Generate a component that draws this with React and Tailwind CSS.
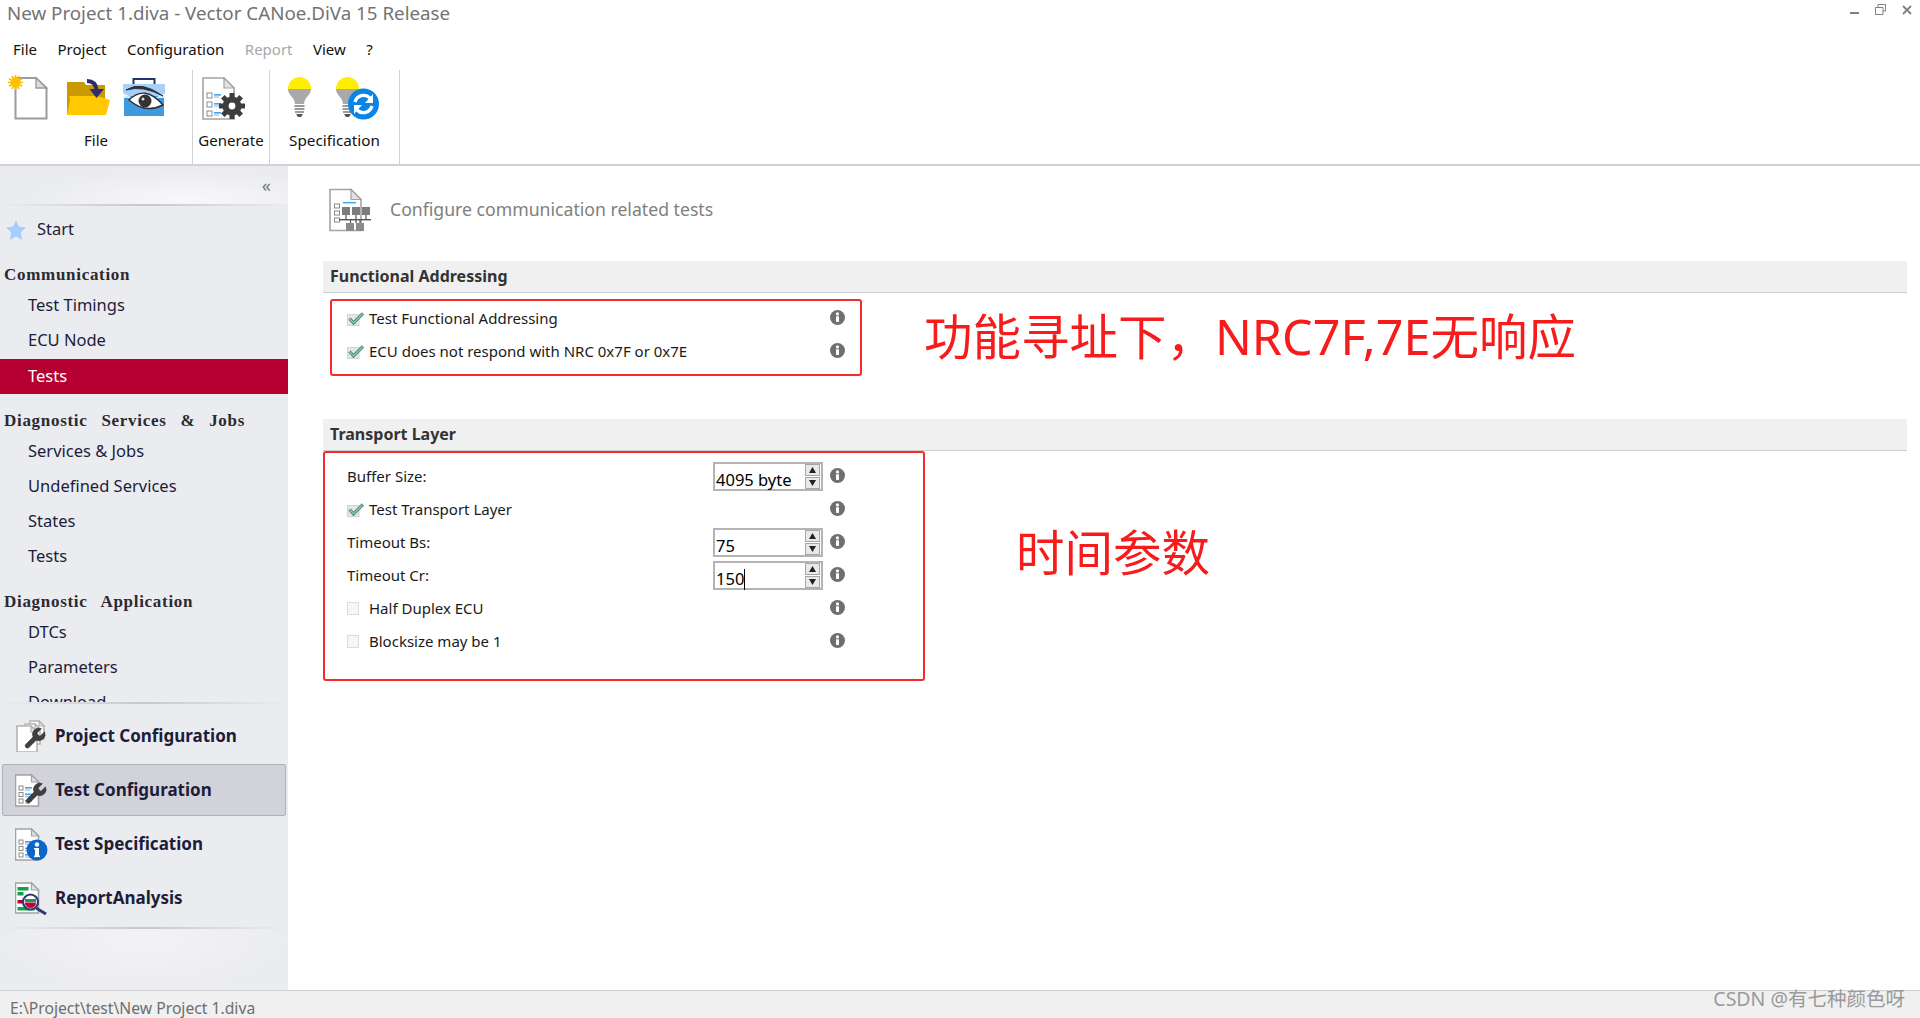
const font = { fontFamily: '"Noto Sans", "Noto Sans CJK SC", sans-serif' };

function Gear({ cx, cy, r = 10 }) {
  return (
    <g fill="#3d3d3d">
      {[0, 45, 90, 135, 180, 225, 270, 315].map((a) => (
        <rect key={a} x={cx - 2.5} y={cy - r - 3.5} width="5" height="7" transform={`rotate(${a} ${cx} ${cy})`} />
      ))}
      <circle cx={cx} cy={cy} r={r} />
      <circle cx={cx} cy={cy} r={r * 0.36} fill="#fff" />
    </g>
  );
}

function DocShape({ w = 31, h = 41, x = 0.5, y = 0.5, fold = 10, stroke = "#a3a3a3" }) {
  return (
    <g>
      <path d={`M${x} ${y}H${x + w - fold}L${x + w} ${y + fold}V${y + h}H${x}Z`} fill="#fff" stroke={stroke} strokeWidth="1.6" />
      <path d={`M${x + w - fold} ${y}V${y + fold}H${x + w}Z`} fill="#e2e2e2" stroke={stroke} strokeWidth="1.2" />
    </g>
  );
}

function ListMarks({ x, y, gap = 8, s = 5 }) {
  return (
    <g>
      {[0, 1, 2].map((i) => (
        <g key={i}>
          <rect x={x} y={y + i * gap} width={s} height={s} fill="#fff" stroke="#8a8a8a" strokeWidth="1" />
          <rect x={x + s + 2} y={y + i * gap + 1} width="7" height="1.6" fill="#49a3ea" />
          <rect x={x + s + 2} y={y + i * gap + 3.4} width="5" height="1.4" fill="#9ccbf0" />
        </g>
      ))}
    </g>
  );
}

function Wrench({ x, y, s = 1.35 }) {
  return (
    <path
      transform={`translate(${x} ${y}) scale(${s})`}
      fill="#3f3f3f"
      stroke="#3f3f3f"
      strokeWidth="0.6"
      d="M14.7 6.3a1 1 0 0 0 0 1.4l1.6 1.6a1 1 0 0 0 1.4 0l3.77-3.77a6 6 0 0 1-7.94 7.94l-6.91 6.91a2.12 2.12 0 0 1-3-3l6.91-6.91a6 6 0 0 1 7.94-7.94l-3.76 3.76z"
    />
  );
}

function NewFileIcon() {
  return (
    <svg width="40" height="45" viewBox="0 0 40 45">
      <path d="M7.5 3H28L38.5 13V43.5H7.5Z" fill="#fff" stroke="#9c9c9c" strokeWidth="2" />
      <path d="M28 3V13H38.5Z" fill="#dcdcdc" stroke="#9c9c9c" strokeWidth="1.4" />
      <g fill="#ffc000">
        {[0, 30, 60, 90, 120, 150].map((a) => (
          <rect key={a} x="6.7" y="0" width="1.6" height="15" transform={`rotate(${a} 7.5 7.5)`} />
        ))}
        <circle cx="7.5" cy="7.5" r="5" />
      </g>
    </svg>
  );
}

function FolderIcon() {
  return (
    <svg width="43" height="37" viewBox="0 0 43 37">
      <path d="M0 4H17L19 7H38V37H0Z" fill="#c99a00" />
      <path d="M3 22H43L39 37H0Z" fill="#ffc800" />
      <path d="M2.5 18H30L43 22H3Z" fill="#ffc800" />
      <path d="M20 3C26 3 29 6 29.5 12" fill="none" stroke="#2c2e6b" strokeWidth="4" />
      <path d="M22.5 11H37L29.5 20Z" fill="#2c2e6b" />
    </svg>
  );
}

function EyeBoxIcon() {
  return (
    <svg width="42" height="38" viewBox="0 0 42 38">
      <rect x="10.5" y="1" width="21" height="7" fill="none" stroke="#22356e" strokeWidth="2" />
      <rect x="0" y="6" width="42" height="14" fill="#a6d0f6" />
      <rect x="1" y="18" width="40" height="20" fill="#3f9ade" />
      <path d="M0 15L10 20H32L42 15V20H0Z" fill="#fff" opacity="0.8" />
      <path d="M6 22Q22 6 40 27Q22 36 6 22Z" fill="#fff" stroke="#2d2d3a" strokeWidth="1.4" />
      <circle cx="22" cy="23" r="6.5" fill="#333" />
      <circle cx="20" cy="21" r="1.5" fill="#ddd" />
      <path d="M3 12Q18 2 40 18Q20 7 3 12Z" fill="#30303d" stroke="#30303d" />
    </svg>
  );
}

function GenerateIcon() {
  return (
    <svg width="44" height="43" viewBox="0 0 44 43">
      <DocShape w={31} h={41} x={1} y={1} />
      <ListMarks x={5} y={16} gap={9} s={5} />
      <Gear cx={30} cy={29} r={9.5} />
    </svg>
  );
}

function BulbShape() {
  return (
    <g>
      <path d="M0 12A11.5 12 0 0 1 23 12Z" fill="#ffee00" />
      <path d="M0 12H23C23 18 16.5 20 16 27H7C6.5 20 0 18 0 12Z" fill="#a9a9a9" />
      <rect x="6.5" y="28" width="10" height="2" fill="#9a9a9a" />
      <rect x="6.5" y="31" width="10" height="2" fill="#9a9a9a" />
      <rect x="7" y="34" width="9" height="2" fill="#9a9a9a" />
      <path d="M8 37H15L13 40H10Z" fill="#555" />
    </g>
  );
}

function BulbIcon() {
  return (
    <svg width="23" height="41" viewBox="0 0 23 41">
      <BulbShape />
    </svg>
  );
}

function BulbSyncIcon() {
  return (
    <svg width="43" height="43" viewBox="0 0 43 43">
      <BulbShape />
      <circle cx="27.5" cy="27" r="15.5" fill="#0a84e6" />
      <path d="M19 25A9 9 0 0 1 34 21" fill="none" stroke="#fff" strokeWidth="3.4" />
      <path d="M37 17V26H29Z" fill="#fff" />
      <path d="M36 29A9 9 0 0 1 21 33" fill="none" stroke="#fff" strokeWidth="3.4" />
      <path d="M18 37V28H26Z" fill="#fff" />
    </svg>
  );
}

function PageNetworkIcon() {
  return (
    <svg width="42" height="44" viewBox="0 0 42 44" className="shrink-0">
      <DocShape w={31} h={41} x={1} y={1.5} />
      <rect x="5.5" y="16" width="5" height="4" fill="#fff" stroke="#888" />
      <rect x="5.5" y="23" width="5" height="4" fill="#fff" stroke="#888" />
      <rect x="5.5" y="30" width="5" height="4" fill="#fff" stroke="#888" />
      <rect x="14" y="14" width="13" height="1.4" fill="#3ba3ea" />
      <rect x="13" y="19" width="8" height="8" fill="#7c7c7c" />
      <rect x="23" y="19" width="8" height="8" fill="#7c7c7c" />
      <rect x="33" y="19" width="8" height="8" fill="#7c7c7c" />
      <rect x="10" y="31" width="32" height="1.4" fill="#555" />
      <path d="M17 27V31M27 27V35M37 27V31M21.5 31V35M31 31V35" stroke="#555" strokeWidth="1.2" />
      <rect x="17" y="35" width="8" height="8" fill="#8a8a8a" />
      <rect x="27" y="35" width="8" height="8" fill="#8a8a8a" />
    </svg>
  );
}

function ProjectConfigIcon() {
  return (
    <svg width="32" height="32" viewBox="0 0 32 32">
      <DocShape w={14} h={18} x={14} y={1} fold={5} stroke="#b4b4b4" />
      <DocShape w={15} h={20} x={9} y={4} fold={5} stroke="#b4b4b4" />
      <DocShape w={20} h={26} x={1} y={6} fold={6} stroke="#b4b4b4" />
      <Wrench x={6} y={6} s={1.05} />
    </svg>
  );
}

function TestConfigIcon() {
  return (
    <svg width="33" height="33" viewBox="0 0 33 33">
      <DocShape w={23} h={31} x={0.5} y={1} fold={7} />
      <ListMarks x={4} y={12} gap={6.5} s={4} />
      <Wrench x={8} y={7} s={1.05} />
    </svg>
  );
}

function TestSpecIcon() {
  return (
    <svg width="33" height="33" viewBox="0 0 33 33">
      <DocShape w={23} h={31} x={0.5} y={1} fold={7} />
      <ListMarks x={4} y={12} gap={6.5} s={4} />
      <circle cx="22" cy="22" r="10.5" fill="#0b66c8" />
      <rect x="20" y="20" width="4" height="9" fill="#fff" />
      <rect x="19" y="20" width="3" height="1.6" fill="#fff" />
      <rect x="19" y="27.5" width="6" height="1.6" fill="#fff" />
      <circle cx="22" cy="16.5" r="2.2" fill="#fff" />
    </svg>
  );
}

function ReportIcon() {
  return (
    <svg width="33" height="33" viewBox="0 0 33 33">
      <DocShape w={23} h={30} x={0.5} y={1} fold={7} />
      <rect x="2.5" y="5" width="11" height="3.5" fill="#0fa24a" />
      <rect x="2.5" y="10" width="6" height="3.5" fill="#0fa24a" />
      <rect x="2.5" y="18" width="8" height="3.5" fill="#b9003a" />
      <rect x="2.5" y="25" width="17" height="3.5" fill="#0fa24a" />
      <circle cx="15.5" cy="20" r="7.5" fill="#fff" stroke="#333a70" strokeWidth="2.2" />
      <path d="M10 17H21V20H10Z" fill="#0fa24a" />
      <path d="M10 20.5H21A5.5 5.5 0 0 1 10 20.5Z" fill="#b9003a" />
      <path d="M21 26L31 32" stroke="#333a70" strokeWidth="3" />
    </svg>
  );
}

function Checked() {
  return (
    <svg width="17" height="14" viewBox="0 0 17 14" className="shrink-0">
      <rect x="0.5" y="2.5" width="11.5" height="11" fill="#e3e6e4" stroke="#d2d4d3" />
      <path d="M2.5 6.5L6.5 11L16 1.5" fill="none" stroke="#4f917b" strokeWidth="3.2" />
      <path d="M2.5 6.5L6.5 11L16 1.5" fill="none" stroke="#b6e6d2" strokeWidth="1" />
    </svg>
  );
}

function Unchecked() {
  return <div className="w-[12px] h-[13px] mr-[10px] shrink-0 bg-[#f6f6f6] border border-[#dcdcdc]"></div>;
}

function Info() {
  return (
    <svg width="15" height="15" viewBox="0 0 15 15" className="shrink-0 -mt-[2px]">
      <circle cx="7.5" cy="7.5" r="7.5" fill="#6f6f6f" />
      <circle cx="7.5" cy="3.9" r="1.6" fill="#fff" />
      <rect x="6" y="6.3" width="3" height="5.6" fill="#fff" />
    </svg>
  );
}

function Spinner({ value, caret }) {
  return (
    <div className="w-[110px] h-[29px] border-2 border-[#b4b4b4] bg-white flex items-center justify-between pl-[1px] pr-[1px] text-[16.5px] text-black">
      <span className="flex items-center mt-[8px]">
        {value}
        {caret && <span className="w-px h-[21px] bg-black"></span>}
      </span>
      <div className="w-[15px] h-[25px] flex flex-col justify-between">
        <div className="h-[12px] bg-[#e9e9e9] border border-[#a6a6a6] flex items-center justify-center">
          <svg width="7" height="6" viewBox="0 0 7 6"><path d="M3.5 0L7 6H0Z" fill="#222" /></svg>
        </div>
        <div className="h-[12px] bg-[#e9e9e9] border border-[#a6a6a6] flex items-center justify-center">
          <svg width="7" height="6" viewBox="0 0 7 6"><path d="M0 0H7L3.5 6Z" fill="#222" /></svg>
        </div>
      </div>
    </div>
  );
}

function Divider() {
  return <div className="h-[2px] shrink-0 bg-gradient-to-r from-transparent via-[#c6c8ce] to-transparent"></div>;
}

function NavRow({ label, active }) {
  return (
    <div className={`h-[35px] pl-[28px] flex items-center text-[16.5px] ${active ? "bg-[#b50031] text-white" : "text-[#1d1d3a]"}`}>
      {label}
    </div>
  );
}

function NavSection({ label }) {
  return (
    <div
      className="h-[28px] pl-[4px] pt-[2px] flex items-center text-[17px] font-bold tracking-[0.7px] [word-spacing:2px] text-[#2a2a33] whitespace-pre"
      style={{ fontFamily: '"Liberation Serif", serif' }}
    >
      {label}
    </div>
  );
}

function ViewButton({ icon, label, active }) {
  return (
    <div
      className={`flex items-center gap-[7px] text-[17px] font-bold text-[#1d1d3a] ${
        active
          ? "h-[52px] my-[1px] mx-[2px] pl-[12px] bg-[#d2d3da] border border-[#b0b1b9] rounded-[2px]"
          : "h-[54px] pl-[15px]"
      }`}
    >
      <div className="w-[33px] flex justify-center">{icon}</div>
      <span>{label}</span>
    </div>
  );
}

function SectionHeader({ label }) {
  return (
    <div className="h-[32px] bg-[#f0f0f0] border-b border-[#cccccc] pl-[7px] pb-[2px] flex items-center text-[16px] font-bold text-[#333]">
      {label}
    </div>
  );
}

function OptionRow({ checked, label, input, caret }) {
  return (
    <div className="h-[33px] flex items-center text-[15px] text-[#1a1a1a]">
      <div className="flex-1 flex items-center">
        {checked === true && <Checked />}
        {checked === true && <span className="w-[5px]"></span>}
        {checked === false && <Unchecked />}
        {label}
      </div>
      {input && <Spinner value={input} caret={caret} />}
      <div className="w-[22px] flex justify-end">
        <Info />
      </div>
    </div>
  );
}

export default function App() {
  return (
    <div className="relative w-[1920px] h-[1018px] overflow-hidden bg-white flex flex-col" style={font}>
      {/* title bar */}
      <div className="h-[34px] shrink-0 pl-[7px] pr-[8px] flex items-start justify-between">
        <span className="text-[18.75px] leading-[26px] text-[#737373]">New Project 1.diva - Vector CANoe.DiVa 15 Release</span>
        <div className="flex items-start gap-[16px] pt-[4px]">
          <div className="w-[9px] h-[2px] bg-[#808080] mt-[8px]"></div>
          <svg width="11" height="11" viewBox="0 0 11 11">
            <path d="M3 3V0.5H10.5V7H8M0.5 3.5H8V10.5H0.5Z" fill="none" stroke="#808080" />
          </svg>
          <svg width="10" height="10" viewBox="0 0 10 10" className="mt-[1px]">
            <path d="M1 1L9 9M9 1L1 9" stroke="#808080" strokeWidth="1.8" />
          </svg>
        </div>
      </div>

      {/* menu */}
      <div className="h-[36px] shrink-0 pl-[13px] pb-[6px] flex items-center gap-[20.5px] text-[15px] text-[#111]">
        <span>File</span>
        <span>Project</span>
        <span>Configuration</span>
        <span className="text-[#a8a8a8]">Report</span>
        <span>View</span>
        <span>?</span>
      </div>

      {/* ribbon */}
      <div className="h-[96px] shrink-0 flex border-b-2 border-[#d2d2d2] text-[15px] text-[#111]">
        <div className="w-[193px] border-r border-[#d2d2d2] flex flex-col">
          <div className="h-[53px] pl-[8px] pt-[5px] flex items-start gap-[19px]">
            <NewFileIcon />
            <div className="mt-[3px] flex gap-[13px]">
              <FolderIcon />
              <EyeBoxIcon />
            </div>
          </div>
          <div className="flex-1 flex items-center justify-center pb-[6px]">File</div>
        </div>
        <div className="w-[77px] border-r border-[#d2d2d2] flex flex-col">
          <div className="h-[53px] pl-[9px] pt-[7px]">
            <GenerateIcon />
          </div>
          <div className="flex-1 flex items-center justify-center pb-[6px]">Generate</div>
        </div>
        <div className="w-[130px] border-r border-[#d2d2d2] flex flex-col">
          <div className="h-[53px] pl-[18px] pt-[7px] flex gap-[25px]">
            <BulbIcon />
            <BulbSyncIcon />
          </div>
          <div className="flex-1 flex items-center justify-center pb-[6px] text-[15.25px]">Specification</div>
        </div>
      </div>

      <div className="flex-1 min-h-0 flex">
        {/* sidebar */}
        <div className="w-[288px] shrink-0 bg-[#ebecf0] flex flex-col">
          <div className="h-[38px] shrink-0 flex items-center justify-end pr-[17px] bg-[radial-gradient(ellipse_at_65%_90%,#f8f8f9_0%,#ebecf0_60%)]">
            <span className="text-[18px] leading-none text-[#777]">«</span>
          </div>
          <Divider />
          <div className="h-[496px] shrink-0 overflow-hidden">
            <div className="h-[54px] pl-[6px] pb-[7px] flex items-center gap-[11px] text-[16.5px] text-[#1d1d3a]">
              <svg width="20" height="20" viewBox="0 0 20 20">
                <path d="M10 0L13 6.8L20 7.6L14.8 12.4L16.2 20L10 16.2L3.8 20L5.2 12.4L0 7.6L7 6.8Z" fill="#a3d0ff" />
              </svg>
              <span>Start</span>
            </div>
            <NavSection label="Communication" />
            <NavRow label="Test Timings" />
            <NavRow label="ECU Node" />
            <div className="h-px"></div>
            <NavRow label="Tests" active />
            <div className="h-[12px]"></div>
            <NavSection label={"Diagnostic  Services  &  Jobs"} />
            <NavRow label="Services & Jobs" />
            <NavRow label="Undefined Services" />
            <NavRow label="States" />
            <NavRow label="Tests" />
            <div className="h-[13px]"></div>
            <NavSection label={"Diagnostic  Application"} />
            <NavRow label="DTCs" />
            <NavRow label="Parameters" />
            <NavRow label="Download" />
          </div>
          <Divider />
          <div className="h-[5px] shrink-0"></div>
          <ViewButton icon={<ProjectConfigIcon />} label="Project Configuration" />
          <ViewButton icon={<TestConfigIcon />} label="Test Configuration" active />
          <ViewButton icon={<TestSpecIcon />} label="Test Specification" />
          <ViewButton icon={<ReportIcon />} label="ReportAnalysis" />
          <div className="h-[2px] shrink-0"></div>
          <Divider />
          <div className="flex-1 bg-[radial-gradient(ellipse_at_50%_15%,#f3f3f5_0%,#ebecf0_70%)]"></div>
        </div>

        {/* content */}
        <div className="flex-1 min-w-0 pl-[35px] pr-[13px]">
          <div className="h-[95px] pt-[22px] pl-[6px] flex items-start gap-[19px]">
            <PageNetworkIcon />
            <span className="mt-[8px] text-[17.65px] text-[#808080]">Configure communication related tests</span>
          </div>

          <SectionHeader label="Functional Addressing" />
          <div className="relative mt-[6px] ml-[7px] w-[532px] h-[77px] border-2 border-[#f52a2a] rounded-[3px] pl-[15px] pr-[15px] pt-[1px]">
            <OptionRow checked label="Test Functional Addressing" />
            <OptionRow checked label="ECU does not respond with NRC 0x7F or 0x7E" />
            <div className="absolute left-[592px] top-[3px] whitespace-nowrap text-[48.5px] leading-[64px] text-[#f61c1c]">
              功能寻址下，NRC7F,7E无响应
            </div>
          </div>

          <div className="mt-[43px]">
            <SectionHeader label="Transport Layer" />
          </div>
          <div className="relative w-[602px] h-[230px] border-2 border-[#f52a2a] rounded-[3px] pl-[22px] pr-[78px] pt-[7px]">
            <OptionRow label="Buffer Size:" input="4095 byte" />
            <OptionRow checked label="Test Transport Layer" />
            <OptionRow label="Timeout Bs:" input="75" />
            <OptionRow label="Timeout Cr:" input="150" caret />
            <OptionRow checked={false} label="Half Duplex ECU" />
            <OptionRow checked={false} label="Blocksize may be 1" />
            <div className="absolute left-[691px] top-[67px] whitespace-nowrap text-[48.5px] leading-[64px] text-[#f61c1c]">时间参数</div>
          </div>
        </div>
      </div>

      {/* status bar */}
      <div className="h-[28px] shrink-0 bg-[#f0f0f0] border-t border-[#cfcfcf] pl-[10px] pt-[9px] flex items-center text-[15.7px] text-[#6e6e6e]">
        E:\Project\test\New Project 1.diva
      </div>

      {/* watermark */}
      <div className="absolute right-[15px] bottom-[6px] text-[19.5px] leading-[26px] text-[#9a9a9a]">CSDN @有七种颜色呀</div>
    </div>
  );
}
